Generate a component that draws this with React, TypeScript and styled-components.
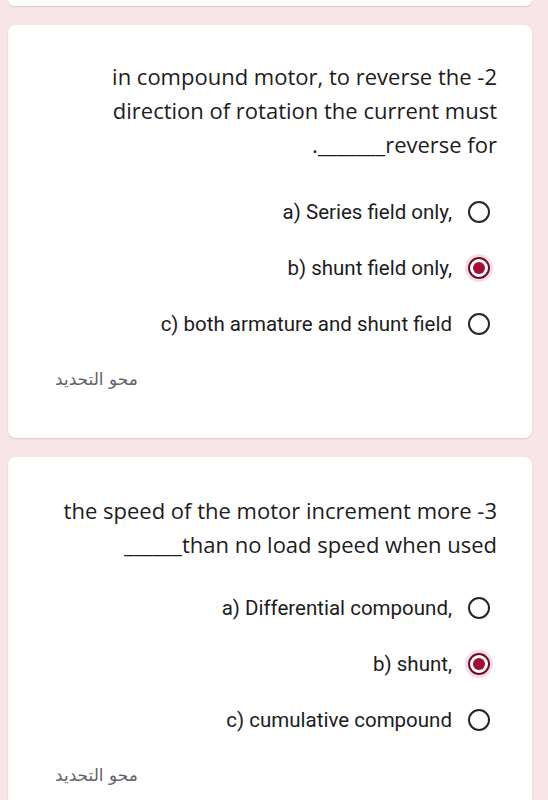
import styled, { createGlobalStyle } from "styled-components";

const questions = [
  {
    id: "q2",
    lines: [
      "in compound motor, to reverse the -2",
      "direction of rotation the current must",
    ],
    blankLine: { before: ".", blank: "_______", after: "reverse for" },
    options: [
      { id: "a", label: "a) Series field only,", checked: false },
      { id: "b", label: "b) shunt field only,", checked: true },
      { id: "c", label: "c) both armature and shunt field", checked: false },
    ],
    padTop: 34,
    gap: 23,
  },
  {
    id: "q3",
    lines: ["the speed of the motor increment more -3"],
    blankLine: { before: "", blank: "______", after: "than no load speed when used" },
    options: [
      { id: "a", label: "a) Differential compound,", checked: false },
      { id: "b", label: "b) shunt,", checked: true },
      { id: "c", label: "c) cumulative compound", checked: false },
    ],
    padTop: 36,
    gap: 19,
  },
];

const GlobalStyle = createGlobalStyle`
  body {
    margin: 0;
    background: #f8e5e7;
    font-family: "Roboto", "Liberation Sans", sans-serif;
  }
`;

const Page = styled.div`
  display: flex;
  flex-direction: column;
  gap: 19px;
  padding: 0 16px 0 8px;
`;

const PrevCardTail = styled.div`
  height: 6px;
  background: #fff;
  border-radius: 0 0 8px 8px;
  box-shadow: 0 1px 1px rgba(0, 0, 0, 0.12);
`;

const Card = styled.section<{ $padTop: number }>`
  background: #fff;
  border-radius: 8px;
  box-shadow: 0 1px 2px rgba(0, 0, 0, 0.12);
  padding: ${(p) => p.$padTop}px 35px 49px 47px;
  display: flex;
  flex-direction: column;
`;

const Question = styled.div`
  font-family: "Open Sans", "Liberation Sans", sans-serif;
  font-size: 22px;
  line-height: 34px;
  color: #1c1c1e;
  text-align: right;
`;

const Line = styled.div`
  white-space: nowrap;
`;

const Options = styled.div<{ $gap: number }>`
  margin-top: ${(p) => p.$gap}px;
  display: flex;
  flex-direction: column;
  padding-right: 7px;
`;

const OptionRow = styled.label`
  height: 56px;
  display: flex;
  align-items: center;
  justify-content: flex-end;
  gap: 16px;
  font-size: 20.5px;
  color: #1c1c1e;
`;

const Radio = styled.span<{ $checked: boolean }>`
  width: 22px;
  height: 22px;
  flex: none;
  box-sizing: border-box;
  border-radius: 50%;
  border: 2.5px solid ${(p) => (p.$checked ? "#6e0d26" : "#262626")};
  display: flex;
  align-items: center;
  justify-content: center;
  box-shadow: ${(p) => (p.$checked ? "0 0 0 3px #f6dde3" : "none")};
  &::after {
    content: "";
    width: 12px;
    height: 12px;
    border-radius: 50%;
    background: #a10d33;
    display: ${(p) => (p.$checked ? "block" : "none")};
  }
`;

const Clear = styled.div`
  margin-top: 17px;
  font-family: "DejaVu Sans", sans-serif;
  font-size: 17px;
  line-height: 20px;
  color: #5f6368;
  align-self: flex-start;
  direction: rtl;
`;

export default function App() {
  return (
    <>
      <GlobalStyle />
      <Page>
        <PrevCardTail />
        {questions.map((q) => (
          <Card key={q.id} $padTop={q.padTop}>
            <Question>
              {q.lines.map((l) => (
                <Line key={l}>{l}</Line>
              ))}
              <Line>
                {q.blankLine.before}
                {q.blankLine.blank}
                {q.blankLine.after}
              </Line>
            </Question>
            <Options $gap={q.gap}>
              {q.options.map((o) => (
                <OptionRow key={o.id}>
                  {o.label}
                  <Radio $checked={o.checked} />
                </OptionRow>
              ))}
            </Options>
            <Clear>محو التحديد</Clear>
          </Card>
        ))}
      </Page>
    </>
  );
}
